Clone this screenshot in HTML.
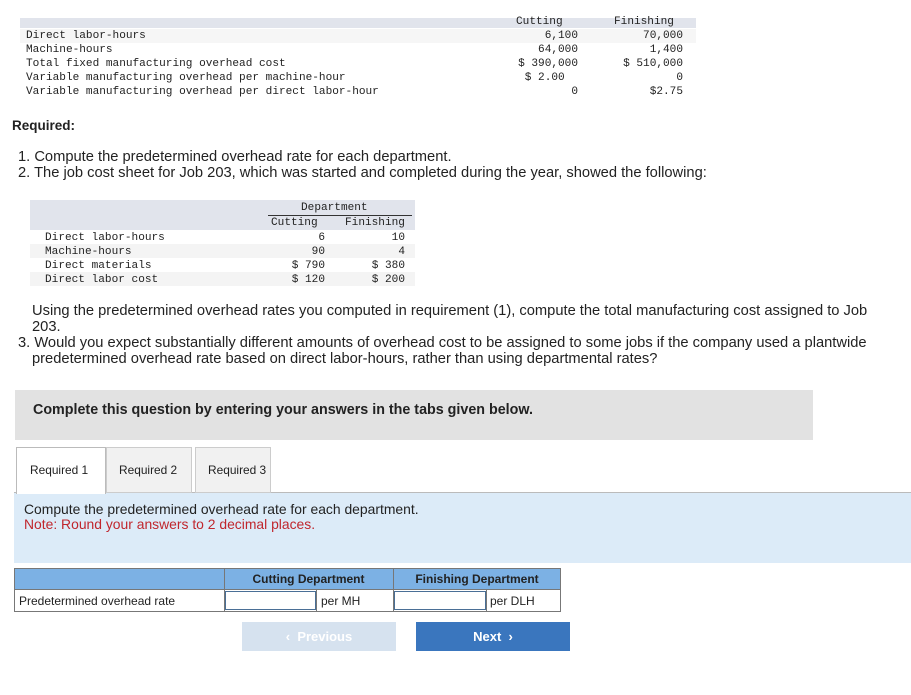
<!DOCTYPE html>
<html><head><style>
body{margin:0;width:911px;height:695px;background:#fff;position:relative;overflow:hidden;font-family:"Liberation Sans",sans-serif;}
.a{position:absolute;white-space:nowrap;}
.m{font-family:"Liberation Mono","DejaVu Sans Mono",monospace;font-size:11.1px;color:#222;}
.r{text-align:right;}
.t{font-size:14.7px;color:#222;}
</style></head><body>
<div class="a" style="left:20px;top:18px;width:676px;height:10px;background:#e1e4ec"></div>
<div class="a" style="left:20px;top:29px;width:676px;height:14px;background:#f6f6f6"></div>
<div class="a" style="left:20px;top:16px;width:676px;height:12px;overflow:hidden">
<div class="a m" style="left:496px;top:0px;">Cutting</div>
<div class="a m" style="left:594px;top:0px;">Finishing</div>
</div>
<div class="a m" style="left:26px;top:29px;line-height:14px">Direct labor-hours<br>Machine-hours<br>Total fixed manufacturing overhead cost<br>Variable manufacturing overhead per machine-hour<br>Variable manufacturing overhead per direct labor-hour</div>
<div class="a m r" style="left:478px;width:100px;top:29px;line-height:14px">6,100<br>64,000<br>$ 390,000<br>$ 2.00&nbsp;&nbsp;<br>0</div>
<div class="a m r" style="left:583px;width:100px;top:29px;line-height:14px">70,000<br>1,400<br>$ 510,000<br>0<br>$2.75</div>

<div class="a" style="left:12px;top:118px;font-size:13.5px;font-weight:bold;color:#222">Required:</div>
<div class="a t" style="left:18px;top:149px;">1. Compute the predetermined overhead rate for each department.</div>
<div class="a t" style="left:18px;top:165px;">2. The job cost sheet for Job 203, which was started and completed during the year, showed the following:</div>

<div class="a" style="left:30px;top:200px;width:385px;height:30px;background:#e1e4ec"></div>
<div class="a m" style="left:301px;top:202px;">Department</div>
<div class="a" style="left:268px;top:215px;width:144px;height:1px;background:#333"></div>
<div class="a m" style="left:271px;top:217px;">Cutting</div>
<div class="a m" style="left:345px;top:217px;">Finishing</div>
<div class="a" style="left:30px;top:244px;width:385px;height:14px;background:#f4f4f4"></div>
<div class="a" style="left:30px;top:272px;width:385px;height:14px;background:#f4f4f4"></div>
<div class="a m" style="left:45px;top:231px;line-height:14px">Direct labor-hours<br>Machine-hours<br>Direct materials<br>Direct labor cost</div>
<div class="a m r" style="left:265px;width:60px;top:231px;line-height:14px">6<br>90<br>$ 790<br>$ 120</div>
<div class="a m r" style="left:345px;width:60px;top:231px;line-height:14px">10<br>4<br>$ 380<br>$ 200</div>

<div class="a t" style="left:32px;top:303px;">Using the predetermined overhead rates you computed in requirement (1), compute the total manufacturing cost assigned to Job</div>
<div class="a t" style="left:32px;top:319px;">203.</div>
<div class="a t" style="left:18px;top:335px;">3. Would you expect substantially different amounts of overhead cost to be assigned to some jobs if the company used a plantwide</div>
<div class="a t" style="left:32px;top:351px;">predetermined overhead rate based on direct labor-hours, rather than using departmental rates?</div>

<div class="a" style="left:15px;top:390px;width:798px;height:50px;background:#e2e2e2"></div>
<div class="a" style="left:33px;top:402px;font-size:14.3px;font-weight:bold;color:#222">Complete this question by entering your answers in the tabs given below.</div>

<div class="a" style="left:14px;top:492px;width:897px;height:70px;background:#dcebf8;border-top:1px solid #bbb"></div>
<div class="a" style="left:16px;top:447px;width:88px;height:46px;background:#fff;border:1px solid #bbb;border-bottom:none"></div>
<div class="a" style="left:106px;top:447px;width:84px;height:44px;background:#f1f1f1;border:1px solid #ccc"></div>
<div class="a" style="left:195px;top:447px;width:74px;height:44px;background:#f1f1f1;border:1px solid #ccc"></div>
<div class="a" style="left:30px;top:463px;font-size:11.9px;color:#222">Required 1</div>
<div class="a" style="left:119px;top:463px;font-size:11.9px;color:#222">Required 2</div>
<div class="a" style="left:208px;top:463px;font-size:11.9px;color:#222">Required 3</div>
<div class="a" style="left:24px;top:501px;font-size:13.9px;color:#222">Compute the predetermined overhead rate for each department.</div>
<div class="a" style="left:24px;top:516px;font-size:13.9px;color:#c0262d">Note: Round your answers to 2 decimal places.</div>

<div class="a" style="left:14px;top:568px;width:547px;height:22px;background:#7cb1e4;border:1px solid #777;box-sizing:border-box"></div>
<div class="a" style="left:224px;top:568px;width:1px;height:44px;background:#777"></div>
<div class="a" style="left:393px;top:568px;width:1px;height:44px;background:#777"></div>
<div class="a" style="left:14px;top:590px;width:547px;height:22px;border:1px solid #777;border-top:none;box-sizing:border-box"></div>
<div class="a" style="left:225px;top:591px;width:91px;height:19px;border:1px solid #4a6f96;box-sizing:border-box"></div>
<div class="a" style="left:394px;top:591px;width:92px;height:19px;border:1px solid #4a6f96;box-sizing:border-box"></div>
<div class="a" style="left:316px;top:590px;width:1px;height:22px;background:#777"></div>
<div class="a" style="left:486px;top:590px;width:1px;height:22px;background:#777"></div>
<div class="a" style="left:224px;top:572px;width:169px;text-align:center;font-size:12px;font-weight:bold;color:#222">Cutting Department</div>
<div class="a" style="left:393px;top:572px;width:168px;text-align:center;font-size:12px;font-weight:bold;color:#222">Finishing Department</div>
<div class="a" style="left:19px;top:594px;font-size:12px;color:#222">Predetermined overhead rate</div>
<div class="a" style="left:321px;top:594px;font-size:12px;color:#222">per MH</div>
<div class="a" style="left:490px;top:594px;font-size:12px;color:#222">per DLH</div>

<div class="a" style="left:242px;top:622px;width:154px;height:29px;background:#d6e2ef;color:#fff;font-size:13px;font-weight:bold;text-align:center;line-height:29px">&lsaquo;&nbsp; Previous</div>
<div class="a" style="left:416px;top:622px;width:154px;height:29px;background:#3a76be;color:#fff;font-size:13px;font-weight:bold;text-align:center;line-height:29px">Next &nbsp;&rsaquo;</div>
</body></html>
